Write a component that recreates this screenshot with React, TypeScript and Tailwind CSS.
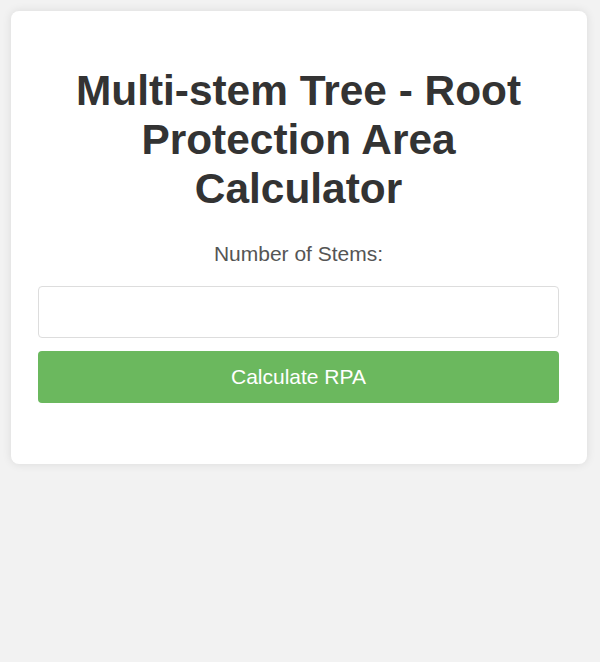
export default function App() {
  return (
    <div className="min-h-[662px] bg-[#f2f2f2] p-[11px] font-['Liberation_Sans',Arial,sans-serif]">
      <div className="w-[576px] bg-white rounded-lg shadow-[0_0_10px_rgba(0,0,0,0.1)] pl-[27px] pr-[28px] pt-[55px] pb-[61px] text-center">
        <h1 className="text-[42.4px] leading-[49px] font-bold text-[#333] px-[10px]">
          Multi-stem Tree - Root Protection Area Calculator
        </h1>
        <label className="block mt-[29px] text-[21px] leading-[24px] text-[#555]">Number of Stems:</label>
        <input
          type="number"
          className="block w-full h-[52px] mt-[20px] border border-[#ddd] rounded bg-white px-3 text-[20px] outline-none"
        />
        <button className="block w-full h-[52px] mt-[13px] bg-[#6bb85e] text-white text-[21px] rounded">
          Calculate RPA
        </button>
      </div>
    </div>
  );
}
